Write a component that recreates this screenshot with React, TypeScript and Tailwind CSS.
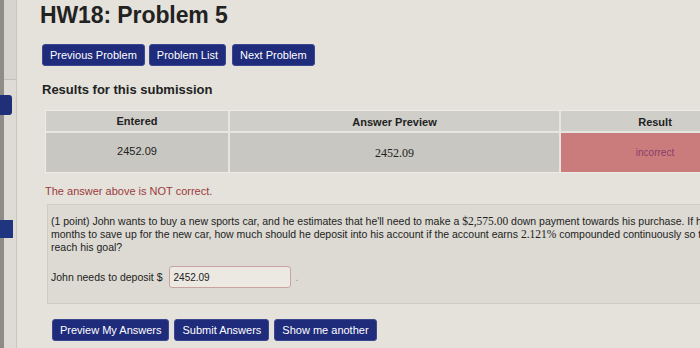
import React from 'react';

const navBtn = 'bg-[#1f2b7b] text-white text-[11px] leading-none px-[7px] h-[22px] rounded-[3px] border border-[#3b4790] flex items-center';
const serif = { fontFamily: '"Liberation Serif", "Times New Roman", serif' };

export default function App() {
  return (
    <div className="w-[700px] h-[348px] overflow-hidden flex bg-[#e4e2db] text-[#222]" style={{ fontFamily: '"Liberation Sans", Arial, sans-serif' }}>
      {/* side strip */}
      <div className="w-[17px] shrink-0 flex">
        <div className="w-[4px] bg-[#8e8c86]" />
        <div className="flex-1 flex flex-col border-r border-[#c9c7c0]">
          <div className="h-[80px] bg-[#d6d4cd] border-b border-[#c2c0b9]" />
          <div className="flex-1 bg-[#dddbd4] relative">
            <div className="absolute left-[-4px] top-[15px] w-[12px] h-[20px] bg-[#1f2f78] rounded-r-[3px]" />
            <div className="absolute left-[-4px] top-[140px] w-[13px] h-[18px] bg-[#1f3580]" />
          </div>
        </div>
      </div>

      <div className="flex-1 pl-[23px] flex flex-col">
        <h1 className="text-[23px] font-bold leading-none mt-[4px] h-[22px] tracking-[-0.1px]">HW18: Problem 5</h1>

        <div className="flex gap-[4px] mt-[18px] ml-[2px]">
          <button className={navBtn}>Previous Problem</button>
          <button className={navBtn}>Problem List</button>
          <button className={navBtn + ' ml-[2px]'}>Next Problem</button>
        </div>

        <div className="text-[13px] font-bold mt-[17px] ml-[2px] leading-none">Results for this submission</div>

        <div className="mt-[14px] ml-[5px] w-[705px] border border-[#ecebe6] text-[11px]">
          <div className="flex h-[22px] bg-[#cfcec8] font-bold border-b-2 border-[#e6e5e0]">
            <div className="w-[184px] flex items-center justify-center border-r-2 border-[#e6e5e0]">Entered</div>
            <div className="w-[331px] flex items-center justify-center border-r-2 border-[#e6e5e0] pt-[3px]">Answer Preview</div>
            <div className="flex-1 flex items-center justify-center pt-[2px]">Result</div>
          </div>
          <div className="flex h-[39px] bg-[#c8c7c1]">
            <div className="w-[184px] flex items-center justify-center border-r-2 border-[#e6e5e0] pb-[2px]">2452.09</div>
            <div className="w-[331px] flex items-center justify-center border-r-2 border-[#e6e5e0] text-[12px]" style={serif}>2452.09</div>
            <div className="flex-1 flex items-center justify-center bg-[#c97c7b] text-[#8b3c6c] text-[10px]">incorrect</div>
          </div>
        </div>

        <div className="text-[11px] text-[#9c3b3b] mt-[13px] ml-[5px] leading-none">The answer above is NOT correct.</div>

        <div className="mt-[7px] ml-[7px] w-[720px] h-[100px] bg-[#dcdad3] border border-[#cfcdc6] px-[3px] pt-[10px] text-[10.5px] leading-[13px] whitespace-nowrap">
          <div>(1 point) John wants to buy a new sports car, and he estimates that he'll need to make a <span className="text-[11.5px]" style={serif}>$2,575.00</span> down payment towards his purchase. If he ha</div>
          <div>months to save up for the new car, how much should he deposit into his account if the account earns <span className="text-[11.5px]" style={serif}>2.121%</span> compounded continuously so that</div>
          <div>reach his goal?</div>
          <div className="flex items-center mt-[12px]">
            <span>John needs to deposit $</span>
            <div className="ml-[6px] w-[122px] h-[22px] bg-[#ece9e3] border border-[#c9a3a0] rounded-[3px] flex items-center pl-[4px] text-[10px]">2452.09</div>
            <span className="ml-[5px] text-[#999]">.</span>
          </div>
        </div>

        <div className="flex gap-[5px] mt-[15px] ml-[12px]">
          <button className={navBtn}>Preview My Answers</button>
          <button className={navBtn}>Submit Answers</button>
          <button className={navBtn}>Show me another</button>
        </div>
      </div>
    </div>
  );
}
